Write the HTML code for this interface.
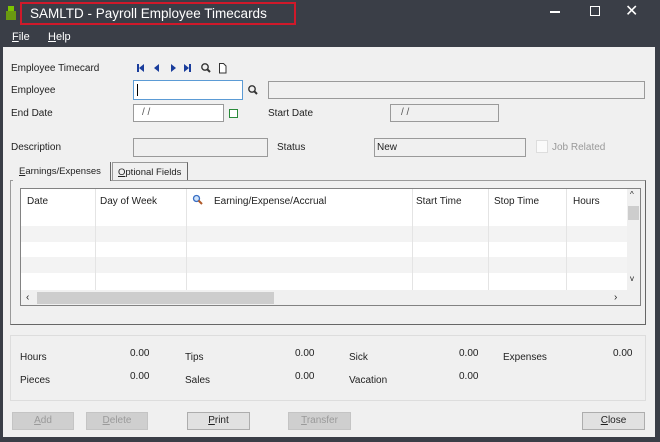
<!DOCTYPE html><html><head><style>
*{margin:0;padding:0;box-sizing:border-box}
body{width:660px;height:442px;background:#3a3e47;font-family:"Liberation Sans",sans-serif;font-size:10px;color:#222;position:relative;overflow:hidden}
.a{position:absolute}
.f{position:absolute;border:1px solid #9a9a9a;background:#f0f0f0}
.t{position:absolute;font-size:10px}
.btn{position:absolute;height:18px;border:1px solid #adadad;background:#e1e1e1;text-align:center;line-height:16px;font-size:10px}
.dis{color:#9a9a9a;background:#cfcfcf;border-color:#c4c4c4}
.vl{position:absolute;top:0;bottom:0;width:1px;background:#e4e4e4}
</style></head><body>
<div class="a" style="left:6px;top:6px;width:10px;height:14px"><div class="a" style="left:2px;top:0;width:6px;height:5px;background:#7cc400"></div><div class="a" style="left:0;top:5px;width:10px;height:9px;background:#6a9a10"></div></div>
<div class="a" style="left:20px;top:2px;width:276px;height:23px;border:2px solid #d0192a"></div>
<div class="t" style="left:30px;top:6px;font-size:13.5px;color:#fff">SAMLTD - Payroll Employee Timecards</div>
<div class="a" style="left:550px;top:11px;width:10px;height:2px;background:#fff"></div>
<div class="a" style="left:590px;top:6px;width:10px;height:10px;border:1px solid #fff"></div>
<div class="t" style="left:625px;top:1px;font-size:16px;color:#fff">✕</div>
<div class="t" style="left:12px;top:31px;color:#fff;font-size:11px"><u>F</u>ile</div>
<div class="t" style="left:48px;top:31px;color:#fff;font-size:11px"><u>H</u>elp</div>
<div class="a" style="left:3px;top:47px;width:652px;height:390px;background:#f0f0f0"></div>
<div class="t" style="left:11px;top:63px">Employee Timecard</div>
<svg class="a" style="left:135px;top:62px" width="95" height="12" viewBox="0 0 95 12">
<g fill="#1a3d9c"><rect x="2" y="2" width="2" height="8"/><path d="M9 2v8l-5-4z"/>
<path d="M24 2v8l-5-4z"/>
<path d="M36 2v8l5-4z"/>
<path d="M49 2v8l5-4z"/><rect x="54" y="2" width="2" height="8"/></g>
<circle cx="70" cy="5" r="3.2" fill="none" stroke="#333" stroke-width="1.4"/><path d="M72 7l3 3" stroke="#333" stroke-width="2"/>
<path d="M84.5 1.5h4l2.5 2.5v7h-6.5z" fill="#fff" stroke="#333"/>
</svg>
<div class="t" style="left:11px;top:85px">Employee</div>
<div class="f" style="left:133px;top:80px;width:110px;height:20px;border-color:#5b9bd5;background:#fff"></div>
<div class="a" style="left:137px;top:84px;width:1px;height:12px;background:#000"></div>
<svg class="a" style="left:247px;top:84px" width="12" height="12"><circle cx="5" cy="5" r="3.2" fill="none" stroke="#333" stroke-width="1.4"/><path d="M7 7l3 3" stroke="#333" stroke-width="2"/></svg>
<div class="f" style="left:268px;top:81px;width:377px;height:18px"></div>
<div class="t" style="left:11px;top:108px">End Date</div>
<div class="f" style="left:133px;top:104px;width:91px;height:18px;background:#fff"><span style="position:absolute;left:8px;top:2px;color:#555">/ /</span></div>
<div class="a" style="left:229px;top:109px;width:9px;height:9px;border:1.5px solid #2a8a3a;background:#fff"></div>
<div class="t" style="left:268px;top:108px">Start Date</div>
<div class="f" style="left:390px;top:104px;width:109px;height:18px"><span style="position:absolute;left:10px;top:2px;color:#555">/ /</span></div>
<div class="t" style="left:11px;top:142px">Description</div>
<div class="f" style="left:133px;top:138px;width:135px;height:19px"></div>
<div class="t" style="left:277px;top:142px">Status</div>
<div class="f" style="left:374px;top:138px;width:152px;height:19px"><span style="position:absolute;left:2px;top:3px">New</span></div>
<div class="a" style="left:536px;top:140px;width:12px;height:13px;border:1px solid #ddd;background:#fafafa"></div>
<div class="t" style="left:552px;top:142px;color:#999">Job Related</div>
<div class="a" style="left:10px;top:180px;width:636px;height:145px;border:1px solid #9a9a9a;border-bottom-color:#666;border-right-color:#666"></div>
<div class="a" style="left:13px;top:162px;width:98px;height:19px;background:#f0f0f0;border-right:1px solid #666"></div>
<div class="t" style="left:19px;top:166px;font-size:9.5px"><u>E</u>arnings/Expenses</div>
<div class="a" style="left:112px;top:162px;width:76px;height:18px;border:1px solid #999;border-bottom:none;border-right-color:#666"></div>
<div class="t" style="left:118px;top:167px;font-size:9.5px"><u>O</u>ptional Fields</div>
<div class="a" style="left:20px;top:188px;width:621px;height:118px;border:1px solid #828282;background:#fff;overflow:hidden">
<div class="a" style="left:0;top:37px;width:620px;height:16px;background:#f3f3f3"></div>
<div class="a" style="left:0;top:68px;width:620px;height:16px;background:#f3f3f3"></div>
<div class="vl" style="left:74px"></div><div class="vl" style="left:165px"></div><div class="vl" style="left:391px"></div><div class="vl" style="left:467px"></div><div class="vl" style="left:545px"></div>
<div class="t" style="left:6px;top:7px">Date</div>
<div class="t" style="left:79px;top:7px">Day of Week</div>
<svg class="a" style="left:171px;top:5px" width="12" height="12"><circle cx="4.5" cy="4.5" r="3" fill="#cfe3fa" stroke="#3a6fc4" stroke-width="1.3"/><path d="M6.5 6.5l3.5 3.5" stroke="#b05a2a" stroke-width="2"/></svg>
<div class="t" style="left:193px;top:7px">Earning/Expense/Accrual</div>
<div class="t" style="left:395px;top:7px">Start Time</div>
<div class="t" style="left:473px;top:7px">Stop Time</div>
<div class="t" style="left:552px;top:7px">Hours</div>
<div class="a" style="left:606px;top:0;width:14px;height:101px;background:#f0f0f0"><div class="a" style="left:1px;top:17px;width:11px;height:14px;background:#cdcdcd"></div><div class="t" style="left:3px;top:1px;font-size:8px">^</div><div class="t" style="left:3px;top:85px;font-size:8px">v</div></div>
<div class="a" style="left:0;top:101px;width:620px;height:16px;background:#f0f0f0"><div class="a" style="left:16px;top:2px;width:237px;height:12px;background:#cdcdcd"></div><div class="t" style="left:5px;top:2px">‹</div><div class="t" style="left:593px;top:2px">›</div></div>
</div>
<div class="a" style="left:10px;top:335px;width:636px;height:66px;border:1px solid #ddd"></div>
<div class="t" style="left:20px;top:352px">Hours</div><div class="t" style="left:130px;top:348px">0.00</div>
<div class="t" style="left:20px;top:375px">Pieces</div><div class="t" style="left:130px;top:371px">0.00</div>
<div class="t" style="left:185px;top:352px">Tips</div><div class="t" style="left:295px;top:348px">0.00</div>
<div class="t" style="left:185px;top:375px">Sales</div><div class="t" style="left:295px;top:371px">0.00</div>
<div class="t" style="left:349px;top:352px">Sick</div><div class="t" style="left:459px;top:348px">0.00</div>
<div class="t" style="left:349px;top:375px">Vacation</div><div class="t" style="left:459px;top:371px">0.00</div>
<div class="t" style="left:503px;top:352px">Expenses</div><div class="t" style="left:613px;top:348px">0.00</div>
<div class="btn dis" style="left:12px;top:412px;width:62px"><u>A</u>dd</div>
<div class="btn dis" style="left:86px;top:412px;width:62px"><u>D</u>elete</div>
<div class="btn" style="left:187px;top:412px;width:63px"><u>P</u>rint</div>
<div class="btn dis" style="left:288px;top:412px;width:63px"><u>T</u>ransfer</div>
<div class="btn" style="left:582px;top:412px;width:63px"><u>C</u>lose</div>
</body></html>
